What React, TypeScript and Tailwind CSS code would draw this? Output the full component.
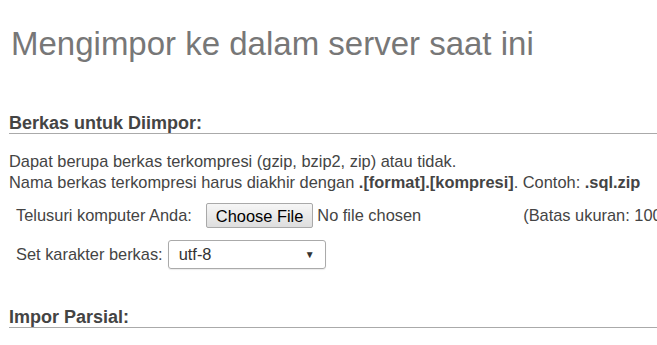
import React from 'react';

const font = { fontFamily: '"Liberation Sans", Arial, sans-serif' };

const SectionTitle = ({ children }: { children: React.ReactNode }) => (
  <h3 className="text-[18px] font-bold leading-[20px] text-[#444] border-b border-[#aaa]">
    {children}
  </h3>
);

const App = () => {
  return (
    <div className="w-[657px] h-[345px] overflow-hidden bg-white pl-[9px] text-[#444]" style={font}>
      <h2 className="pt-[25px] pl-[2px] text-[33px] leading-[38px] text-[#777] font-normal whitespace-nowrap">
        Mengimpor ke dalam server saat ini
      </h2>

      <div className="mt-[50px]">
        <SectionTitle>Berkas untuk Diimpor:</SectionTitle>

        <p className="mt-[17px] text-[16.4px] leading-[21px] whitespace-nowrap">
          Dapat berupa berkas terkompresi (gzip, bzip2, zip) atau tidak.
          <br />
          Nama berkas terkompresi harus diakhir dengan <b>.[format].[kompresi]</b>. Contoh: <b>.sql.zip</b>
        </p>

        <div className="mt-[10px] pl-[7px] flex items-center whitespace-nowrap text-[16.4px]">
          <span>Telusuri komputer Anda:</span>
          <button className="ml-[14px] h-[25px] px-[9px] text-[16.4px] leading-[20px] text-black border border-[#a9a9a9] rounded-[2px] bg-gradient-to-b from-[#f6f6f6] to-[#dedede]">
            Choose File
          </button>
          <span className="ml-[4px]">No file chosen</span>
          <span className="ml-[102px]">(Batas ukuran: 100 MiB)</span>
        </div>

        <div className="mt-[12px] pl-[7px] flex items-center whitespace-nowrap text-[16.4px]">
          <span>Set karakter berkas:</span>
          <div className="ml-[5px] w-[158px] h-[29px] border border-[#aaa] rounded-[3px] flex items-center justify-between pl-[10px] pr-[10px] text-[#333] shadow-[0_1px_1px_rgba(0,0,0,0.08)]">
            <span>utf-8</span>
            <span className="text-[10px]">▼</span>
          </div>
        </div>

        <div className="mt-[38px]">
          <SectionTitle>Impor Parsial:</SectionTitle>
        </div>
      </div>
    </div>
  );
};

export default App;
